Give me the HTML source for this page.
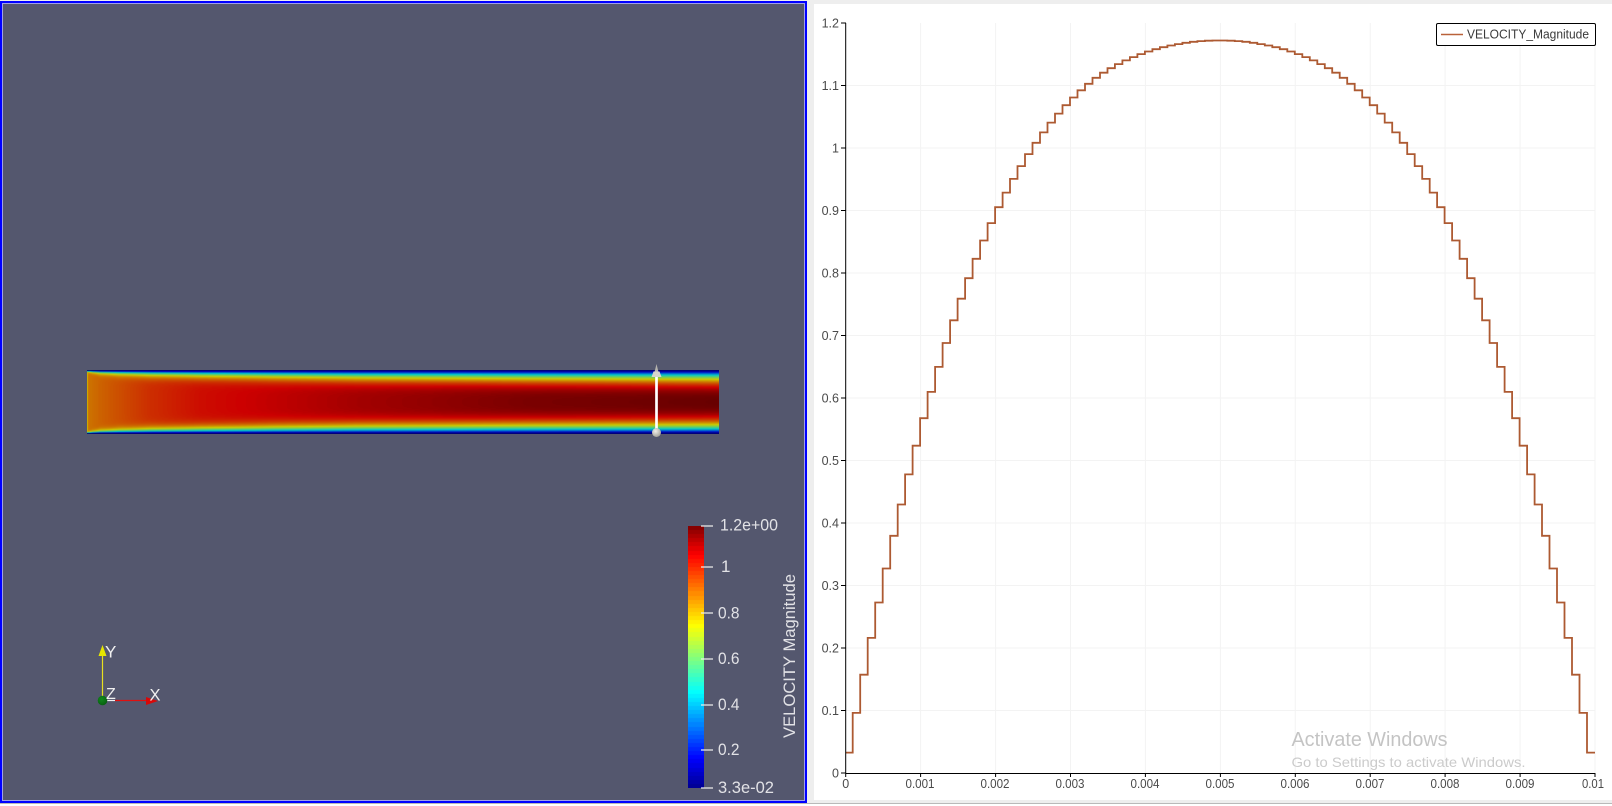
<!DOCTYPE html>
<html><head><meta charset="utf-8"><style>
html,body{margin:0;padding:0;width:1612px;height:806px;overflow:hidden;background:#fff;font-family:"Liberation Sans",sans-serif}
.abs{position:absolute}
svg text{font-family:"Liberation Sans",sans-serif}
</style></head><body>
<div class="abs" style="left:0;top:0;width:1612px;height:803px;background:#eeeeee"></div>
<div class="abs" style="left:0;top:803px;width:1612px;height:1px;background:#b9b9b9"></div>
<div class="abs" style="left:814px;top:4px;width:798px;height:796px;background:#fff"></div>
<div class="abs" style="left:0;top:1px;width:807px;height:802px;background:#0000ff"></div>
<div class="abs" style="left:2px;top:3px;width:801px;height:796px;background:#54576e;border:1px solid #a0a0e8"></div>
<canvas id="f" class="abs" width="632" height="64" style="left:87px;top:370px"></canvas>
<canvas id="b" class="abs" width="16" height="262" style="left:688px;top:526px"></canvas>
<svg class="abs" style="left:0;top:0" width="1612" height="806" viewBox="0 0 1612 806">
<defs>
<radialGradient id="s" cx=".4" cy=".35" r=".75"><stop offset="0" stop-color="#f2f0ea"/><stop offset="1" stop-color="#9a9890"/></radialGradient>
<radialGradient id="g" cx=".4" cy=".35" r=".75"><stop offset="0" stop-color="#108a1c"/><stop offset="1" stop-color="#075a10"/></radialGradient>
</defs>
<!-- probe -->
<line x1="656.500" y1="374" x2="656.500" y2="432" stroke="#fff" stroke-width="2.700"/>
<path d="M656.500 364L658.500 372H654.500Z" fill="#b5b3ad"/>
<path d="M653.500 371.500H659.500L661.500 377H651.500Z" fill="#d6d4ce"/>
<circle cx="656.500" cy="432.500" r="4.500" fill="url(#s)"/>
<!-- colour bar ticks & labels -->
<g stroke="#ececec" stroke-width="1.200">
<path d="M701 526H713M701 567H713M701 613H713M701 659H713M701 705H713M701 750H713M701 788H713" fill="none"/>
</g>
<g fill="#e2e2e6" font-size="17">
<text x="720" y="530.500" textLength="58" lengthAdjust="spacingAndGlyphs">1.2e+00</text>
<text x="721" y="572">1</text>
<text x="718" y="618.500" textLength="21.500" lengthAdjust="spacingAndGlyphs">0.8</text>
<text x="718" y="664" textLength="21.500" lengthAdjust="spacingAndGlyphs">0.6</text>
<text x="718" y="710" textLength="21.500" lengthAdjust="spacingAndGlyphs">0.4</text>
<text x="718" y="755" textLength="21.500" lengthAdjust="spacingAndGlyphs">0.2</text>
<text x="718" y="793" textLength="56" lengthAdjust="spacingAndGlyphs">3.3e-02</text>
<text transform="translate(795,738) rotate(-90)" x="0" y="0" textLength="164" lengthAdjust="spacingAndGlyphs">VELOCITY Magnitude</text>
</g>
<!-- axes widget -->
<line x1="102.500" y1="656" x2="102.500" y2="696" stroke="#e8e020" stroke-width="1.200"/>
<path d="M102.500 645L106.500 656H98.500Z" fill="#e6e600"/>
<line x1="106" y1="700.500" x2="115" y2="700.500" stroke="#f0f0f0" stroke-width="1.200"/>
<line x1="115" y1="700.500" x2="147" y2="700.500" stroke="#e01010" stroke-width="1.200"/>
<path d="M158 701L146 697V705Z" fill="#d80808"/>
<circle cx="102.500" cy="700.500" r="4.800" fill="url(#g)"/>
<g fill="#f0f0f0">
<text x="105" y="657.500" font-size="17">Y</text>
<text x="106" y="699" font-size="16">Z</text>
<text x="149.500" y="700.500" font-size="16.500">X</text>
</g>
<!-- chart grid -->
<path d="M920.600 23V773M995.600 23V773M1070.500 23V773M1145.400 23V773M1220.400 23V773M1295.300 23V773M1370.200 23V773M1445.100 23V773M1520.100 23V773M1595 23V773M846 710.500H1595M846 648H1595M846 585.500H1595M846 523H1595M846 460.500H1595M846 398H1595M846 335.500H1595M846 273H1595M846 210.500H1595M846 148H1595M846 85.500H1595" stroke="#f3f3f3" stroke-width="1" fill="none"/>
<path id="c" d="" fill="none" stroke="#ad5a32" stroke-width="1.800"/>
<path d="M845.700 23V773.500H1595.500M841 23H846M841 85.500H846M841 148H846M841 210.500H846M841 273H846M841 335.500H846M841 398H846M841 460.500H846M841 523H846M841 585.500H846M841 648H846M841 710.500H846M841 773H846M845.700 773V777M920.600 773V777M995.600 773V777M1070.500 773V777M1145.400 773V777M1220.400 773V777M1295.300 773V777M1370.200 773V777M1445.100 773V777M1520.100 773V777M1595 773V777" stroke="#000" stroke-width="1" fill="none"/>
<g fill="#4a4a4a" font-size="12.500" text-anchor="end">
<text x="839" y="27.500">1.2</text><text x="839" y="90">1.1</text><text x="839" y="152.500">1</text>
<text x="839" y="215">0.9</text><text x="839" y="277.500">0.8</text><text x="839" y="340">0.7</text>
<text x="839" y="402.500">0.6</text><text x="839" y="465">0.5</text><text x="839" y="527.500">0.4</text>
<text x="839" y="590">0.3</text><text x="839" y="652.500">0.2</text><text x="839" y="715">0.1</text>
<text x="839" y="777.500">0</text>
</g>
<g fill="#4a4a4a" font-size="12.500" text-anchor="middle">
<text x="845.700" y="788">0</text>
<text x="920" y="788" textLength="29" lengthAdjust="spacingAndGlyphs">0.001</text>
<text x="995" y="788" textLength="29" lengthAdjust="spacingAndGlyphs">0.002</text>
<text x="1070" y="788" textLength="29" lengthAdjust="spacingAndGlyphs">0.003</text>
<text x="1145" y="788" textLength="29" lengthAdjust="spacingAndGlyphs">0.004</text>
<text x="1220" y="788" textLength="29" lengthAdjust="spacingAndGlyphs">0.005</text>
<text x="1295" y="788" textLength="29" lengthAdjust="spacingAndGlyphs">0.006</text>
<text x="1370" y="788" textLength="29" lengthAdjust="spacingAndGlyphs">0.007</text>
<text x="1445" y="788" textLength="29" lengthAdjust="spacingAndGlyphs">0.008</text>
<text x="1520" y="788" textLength="29" lengthAdjust="spacingAndGlyphs">0.009</text>
<text x="1593" y="788" textLength="22" lengthAdjust="spacingAndGlyphs">0.01</text>
</g>
<!-- legend -->
<rect x="1436.500" y="23.500" width="159" height="22" rx="1.500" fill="#fff" stroke="#000"/>
<line x1="1441" y1="34.500" x2="1463" y2="34.500" stroke="#b9623a" stroke-width="1.500"/>
<text x="1467" y="38.500" font-size="12.500" fill="#3a3a3a" textLength="122" lengthAdjust="spacingAndGlyphs">VELOCITY_Magnitude</text>
<!-- watermark -->
<text x="1291.500" y="746" font-size="20" fill="#c4c4c4" textLength="156" lengthAdjust="spacingAndGlyphs">Activate Windows</text>
<text x="1291.500" y="767" font-size="14" fill="#cbcbcb" textLength="234" lengthAdjust="spacingAndGlyphs">Go to Settings to activate Windows.</text>
</svg>
<script>
var stops=[[0,0,0,.5625],[.1111,0,0,1],[.3651,0,1,1],[.4921,.5,1,.5],[.619,1,1,0],[.8889,1,0,0],[1,.5,0,0]];
function jet(t,q){t=Math.max(0,Math.min(1,t));t=(Math.floor(t*(q-.001))+.5)/q;
for(var i=1;i<stops.length;i++){if(t<=stops[i][0]){var a=stops[i-1],b=stops[i],k=(t-a[0])/(b[0]-a[0]);
return [a[1]+(b[1]-a[1])*k,a[2]+(b[2]-a[2])*k,a[3]+(b[3]-a[3])*k];}}return [.5,0,0];}
function lerp(tb,p){for(var i=1;i<tb.length;i++){if(p<=tb[i][0]){var a=tb[i-1],b=tb[i];return a[1]+(b[1]-a[1])*(p-a[0])/(b[0]-a[0]);}}return tb[tb.length-1][1];}
var nT=[[0,40],[.008,24],[.02,15],[.05,10.5],[.1,7.6],[.18,5.9],[.3,4.7],[.43,3.9],[.7,3.2],[1,2.81]];
var cT=[[0,.87],[.02,.9],[.1,.98],[.18,1.03],[.43,1.1],[.7,1.15],[1,1.172]];
var eT=[[0,2.3],[.1,2.4],[.2,2.545],[.32,2.68],[.6,2.81],[1,2.81]];
var vmin=.033,vmax=1.175;
(function(){var x=document.getElementById('f').getContext('2d'),im=x.createImageData(632,64),d=im.data;
for(var j=0;j<64;j++){for(var i=0;i<632;i++){var p=i/631,e=Math.abs(j+.5-32)/32,n=lerp(nT,p),c=lerp(cT,p);
e=Math.min(1,e+.035*Math.pow(e,6));
var v=vmin+(c-vmin)*(1-Math.pow(e,n));if(i==0)v=Math.min(v,.78);
var C=jet((v-vmin)/(vmax-vmin),256),L=.8,o=(j*632+i)*4;
d[o]=C[0]*255*L;d[o+1]=C[1]*255*L;d[o+2]=C[2]*255*L;d[o+3]=255;}}
x.putImageData(im,0,0);
var y=document.getElementById('b').getContext('2d');
for(var r=0;r<262;r++){var C=jet(1-(r+.5)/262,64);y.fillStyle='rgb('+Math.round(C[0]*255)+','+Math.round(C[1]*255)+','+Math.round(C[2]*255)+')';y.fillRect(0,r,16,1);}
var s='',X0=845.7,W=7.493;
for(var k=0;k<100;k++){var q=(k+.5)/100,E=Math.abs(1-2*q),val=1.172*(1-Math.pow(E,lerp(eT,E))),Y=(773-val*625).toFixed(1);
s+=(k==0?'M'+X0+' '+Y:'V'+Y)+'H'+(X0+(k+1)*W-(k<99?.5:0)).toFixed(1);}
document.getElementById('c').setAttribute('d',s);
})();
</script>
</body></html>
